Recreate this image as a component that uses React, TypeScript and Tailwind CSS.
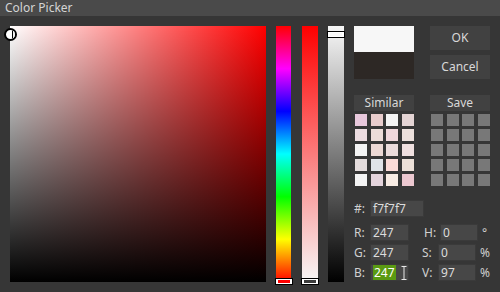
import React from "react";

const similar = [
  ["#e8c8dc", "#e8cccc", "#f4f4f4", "#e4d4d4"],
  ["#ecdce0", "#ecdcd8", "#f0d8dc", "#ece0dc"],
  ["#f4f4f4", "#ecd8d4", "#ecdcdc", "#f0e0e0"],
  ["#e4dcdc", "#e0e4e8", "#fcdcd8", "#ece0d8"],
  ["#f4f4f4", "#e4d4dc", "#f8ece4", "#ecc8d0"],
];

function Marker({ top, inner }: { top: number; inner: string }) {
  return (
    <div
      className="absolute left-[-1px] w-[18px] h-[7px] border border-black bg-white p-[1px]"
      style={{ top }}
    >
      <div className="w-full h-full border-x border-white" style={{ background: inner }} />
    </div>
  );
}

function Field({ label, value, unit, w, selected }: { label: string; value: string; unit?: string; w: string; selected?: boolean }) {
  return (
    <div className="flex items-center h-[17px]">
      <span className="w-[16px] text-[12px] text-[#d0d0d0] leading-none">{label}</span>
      <div className={`${w} h-[17px] bg-[#474747] border border-[#3a3a3a] flex items-center px-[2px] relative`}>
        <span
          className={`text-[12px] leading-[15px] text-[#dcdcdc] ${selected ? "bg-[#5a9a12] text-white px-[1px]" : ""}`}
        >
          {value}
        </span>
        {selected && (
          <svg className="absolute left-[30px] top-[0px]" width="6" height="16" viewBox="0 0 6 16">
            <path d="M0.5 1.5h5M3 1.5v13M0.5 14.5h5" stroke="#e8e8e8" strokeWidth="1" fill="none" />
          </svg>
        )}
      </div>
      {unit && <span className="ml-[4px] text-[12px] text-[#d0d0d0] leading-none">{unit}</span>}
    </div>
  );
}

export default function App() {
  return (
    <div
      className="w-[500px] h-[292px] bg-[#363636] flex flex-col overflow-hidden"
      style={{ fontFamily: "'Noto Sans', 'Open Sans', sans-serif" }}
    >
      <div className="h-[16px] bg-[#4a4a4a] flex items-center pl-[5px]">
        <span className="text-[12px] text-[#d4d4d4] leading-none">Color Picker</span>
      </div>
      <div className="flex pl-[10px] pt-[10px]">
        {/* main SV square */}
        <div
          className="relative w-[256px] h-[256px]"
          style={{ background: "linear-gradient(to right, #ffffff, #ff0000)" }}
        >
          <div className="absolute inset-0 bg-gradient-to-b from-transparent to-black" />
          <div className="absolute left-[-6px] top-[2px] w-[13px] h-[13px] rounded-full border-2 border-black bg-white overflow-hidden">
            <div className="absolute right-0 top-0 w-[3px] h-full bg-[#f0f0f0] border-l border-black" />
          </div>
        </div>
        {/* hue bar */}
        <div
          className="relative ml-[10px] w-[15px] h-[256px]"
          style={{
            background:
              "linear-gradient(to bottom, #ff0000, #ff00ff 16.7%, #0000ff 33.3%, #00ffff 50%, #00ff00 66.7%, #ffff00 83.3%, #ff0000)",
          }}
        >
          <Marker top={252} inner="#ff0000" />
        </div>
        {/* saturation bar */}
        <div
          className="relative ml-[11px] w-[16px] h-[256px]"
          style={{ background: "linear-gradient(to bottom, #ff0000, #f7f7f7)" }}
        >
          <Marker top={252} inner="#3c3c3c" />
        </div>
        {/* value bar */}
        <div
          className="relative ml-[10px] w-[16px] h-[256px]"
          style={{ background: "linear-gradient(to bottom, #f7f7f7, #000000)" }}
        >
          <Marker top={5} inner="#f7f7f7" />
        </div>
        {/* right panel */}
        <div className="ml-[10px] w-[136px] flex flex-col">
          <div className="flex justify-between">
            <div className="w-[60px] h-[53px] flex flex-col">
              <div className="h-[26px] bg-[#f7f7f7]" />
              <div className="h-[27px] bg-[#2d2825]" />
            </div>
            <div className="w-[60px] flex flex-col gap-[5px]">
              <div className="h-[24px] bg-[#414141] flex items-center justify-center text-[12px] text-[#d8d8d8]">OK</div>
              <div className="h-[24px] bg-[#414141] flex items-center justify-center text-[12px] text-[#d8d8d8]">Cancel</div>
            </div>
          </div>
          <div className="flex justify-between mt-[16px]">
            <div className="w-[60px] flex flex-col gap-[3px]">
              <div className="h-[16px] bg-[#414141] flex items-center justify-center text-[12px] text-[#d8d8d8]">Similar</div>
              <div className="grid grid-cols-4 gap-[3px] pl-[1px]">
                {similar.flat().map((c, i) => (
                  <div key={i} className="w-[12px] h-[12px]" style={{ background: c }} />
                ))}
              </div>
            </div>
            <div className="w-[60px] flex flex-col gap-[3px]">
              <div className="h-[16px] bg-[#414141] flex items-center justify-center text-[12px] text-[#d8d8d8]">Save</div>
              <div className="grid grid-cols-4 gap-[3px] pl-[1px]">
                {Array.from({ length: 20 }).map((_, i) => (
                  <div key={i} className="w-[12px] h-[12px] bg-[#787878]" />
                ))}
              </div>
            </div>
          </div>
          <div className="mt-[14px] flex flex-col gap-[7px]">
            <Field label="#:" value="f7f7f7" w="w-[54px]" />
            <div className="flex flex-col gap-[3px]">
              <div className="flex">
                <div className="w-[70px]"><Field label="R:" value="247" w="w-[39px]" /></div>
                <Field label="H:" value="0" unit="°" w="w-[38px]" />
              </div>
              <div className="flex">
                <div className="w-[70px]"><Field label="G:" value="247" w="w-[39px]" /></div>
                <Field label="S:" value="0" unit="%" w="w-[38px]" />
              </div>
              <div className="flex">
                <div className="w-[70px]"><Field label="B:" value="247" w="w-[39px]" selected /></div>
                <Field label="V:" value="97" unit="%" w="w-[38px]" />
              </div>
            </div>
          </div>
        </div>
      </div>
    </div>
  );
}
